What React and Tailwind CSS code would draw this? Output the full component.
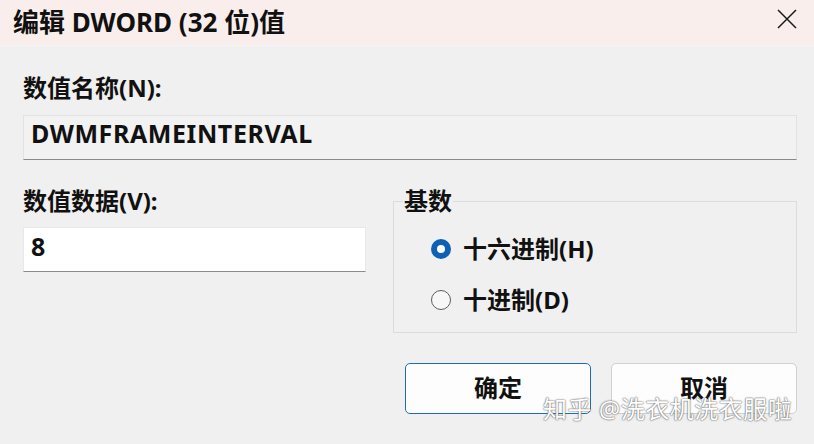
import { useState } from 'react';

function Radio({ checked }) {
  return checked ? (
    <span className="w-[20px] h-[20px] rounded-full bg-[#0f5fb5] flex items-center justify-center shrink-0">
      <span className="w-[8px] h-[8px] rounded-full bg-white" />
    </span>
  ) : (
    <span className="w-[20px] h-[20px] rounded-full border border-[#5c5c5c] bg-[#f7f7f7] shrink-0" />
  );
}

export default function App() {
  const [base, setBase] = useState('hex');

  return (
    <div className="relative w-[814px] h-[444px] overflow-hidden bg-[#f0f0f0] text-[#111] font-['Noto_Sans','Noto_Sans_CJK_SC',sans-serif] font-bold">
      {/* Title bar */}
      <div className="h-[46px] bg-[#f9eeec] flex items-center justify-between pl-[13px] pr-[17px] border-b border-[#f4f4f4]">
        <span className="text-[26px] leading-[30px] -mt-[2px]">编辑 DWORD (32 位)值</span>
        <svg width="20" height="20" viewBox="0 0 20 20" className="-mt-[8px]">
          <path d="M1 1 L19 19 M19 1 L1 19" stroke="#1a1a1a" strokeWidth="1.5" fill="none" />
        </svg>
      </div>

      <div className="pl-[23px] pr-[17px]">
        <div className="mt-[30px] text-[24px] leading-[24px]">数值名称(N):</div>
        <div className="mt-[15px] h-[45px] bg-[#f2f2f2] border border-[#e2e2e2] border-b-[#8a8a8a] flex items-center pl-[7px] pb-[8px] text-[25px] tracking-[0.6px]">
          DWMFRAMEINTERVAL
        </div>

        <div className="mt-[29px] flex">
          <div className="w-[343px]">
            <div className="text-[24px] leading-[24px]">数值数据(V):</div>
            <div className="mt-[14px] h-[45px] bg-white border border-[#e8e8e8] border-b-[#8a8a8a] flex items-center pl-[7px] pb-[6px] text-[25px]">
              8
            </div>
          </div>

          <fieldset className="ml-[27px] flex-1 h-[144px] border border-[#dcdcdc]">
            <legend className="ml-[9px] px-[1px] text-[24px] leading-[24px]">基数</legend>
            <div className="flex flex-col gap-[27px] mt-[24px] pl-[37px]">
              {[
                ['hex', '十六进制(H)'],
                ['dec', '十进制(D)'],
              ].map(([key, label]) => (
                <button key={key} onClick={() => setBase(key)} className="flex items-center gap-[12px] text-[24px] leading-[24px]">
                  <Radio checked={base === key} />
                  <span>{label}</span>
                </button>
              ))}
            </div>
          </fieldset>
        </div>

        <div className="mt-[30px] flex justify-end gap-[20px]">
          <button className="w-[186px] h-[51px] rounded-[5px] bg-[#fdfdfd] border border-[#1f6cb5] text-[24px] pb-[2px]">确定</button>
          <button className="w-[186px] h-[51px] rounded-[5px] bg-[#fdfdfd] border border-[#d0d0d0] text-[24px] pb-[2px]">取消</button>
        </div>
      </div>

      {/* watermark */}
      <div className="absolute left-[543px] top-[394px] text-[24px] leading-[30px] tracking-[0.5px] font-normal text-white [text-shadow:0_0_2px_#5e5e5e,0_0_1px_#5e5e5e] whitespace-nowrap">
        知乎 @洗衣机洗衣服啦
      </div>
    </div>
  );
}
